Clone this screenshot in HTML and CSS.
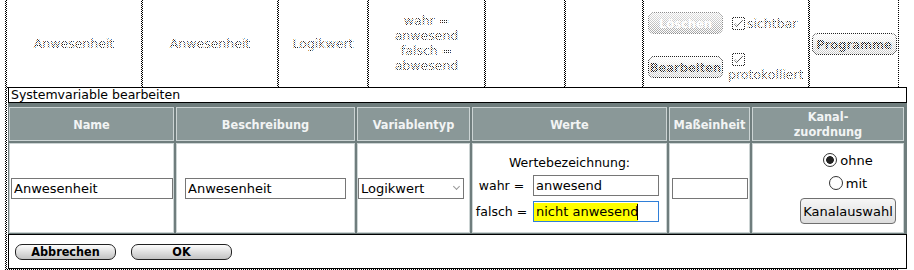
FILE: index.html
```html
<!DOCTYPE html>
<html lang="de">
<head>
  <meta charset="UTF-8">
  <title>Systemvariable bearbeiten</title>
<link rel="stylesheet" href="styles.css">
</head>
<body>

<div class="page">
  <div class="var_list">
    <div class="cell">Anwesenheit</div>
    <div class="cell">Anwesenheit</div>
    <div class="cell">Logikwert</div>
    <div class="cell values">wahr =<br>anwesend<br>falsch =<br>abwesend</div>
    <div class="cell"></div>
    <div class="cell"></div>
    <div class="cell actions">
      <div class="action_row">
        <button class="bg_btn" disabled>Löschen</button>
        <span class="check_label"><svg class="check" width="13" height="13" viewBox="0 0 13 13"><rect x="0.5" y="0.5" width="12" height="12" fill="#fff" stroke="#222"/><polyline points="2.5,6.5 5,9.5 10.5,3" fill="none" stroke="#555" stroke-width="1.3"/></svg>sichtbar</span>
      </div>
      <div class="action_row">
        <button class="bg_btn">Bearbeiten</button>
        <span class="check_label"><svg class="check" width="13" height="13" viewBox="0 0 13 13"><rect x="0.5" y="0.5" width="12" height="12" fill="#fff" stroke="#222"/><polyline points="2.5,6.5 5,9.5 10.5,3" fill="none" stroke="#555" stroke-width="1.3"/></svg>protokolliert</span>
      </div>
    </div>
    <div class="cell"><button class="bg_btn prog_btn">Programme</button></div>

    <div class="cell tall"></div>
    <div class="cell tall"></div>
    <div class="cell tall"></div>
    <div class="cell tall"></div>
    <div class="cell tall"></div>
    <div class="cell tall"></div>
    <div class="cell tall"></div>
    <div class="cell tall"></div>
  </div>
</div>

<!-- grey out the page behind the dialog -->
<div class="shade"></div>

<div class="dialog">
  <div class="dialog_title">Systemvariable bearbeiten</div>

  <div class="edit_table">
    <div class="head">Name</div>
    <div class="head">Beschreibung</div>
    <div class="head">Variablentyp</div>
    <div class="head">Werte</div>
    <div class="head">Maßeinheit</div>
    <div class="head">Kanal-<br>zuordnung</div>

    <div class="data name_cell"><input type="text" class="in_name" value="Anwesenheit"></div>
    <div class="data desc_cell"><input type="text" class="in_desc" value="Anwesenheit"></div>
    <div class="data type_cell">
      <span class="select_wrap">
        <select class="in_type">
          <option>Logikwert</option>
          <option>Werteliste</option>
          <option>Zahl</option>
          <option>Zeichenkette</option>
        </select>
      </span>
    </div>
    <div class="data values_cell">
      <div class="values_box">
        <div class="values_title">Wertebezeichnung:</div>
        <div class="values_grid">
          <label for="in_true">wahr =</label>
          <input type="text" id="in_true" class="in_value" value="anwesend">
          <label for="in_false">falsch =</label>
          <input type="text" id="in_false" class="in_value in_focus" value="nicht anwesend">
        </div>
      </div>
    </div>
    <div class="data unit_cell"><input type="text" class="in_unit" value=""></div>
    <div class="data channel_cell">
      <div class="channel_box">
        <label class="radio_row"><input type="radio" name="channel" checked>ohne</label>
        <label class="radio_row"><input type="radio" name="channel">mit</label>
        <button class="channel_btn">Kanalauswahl</button>
      </div>
    </div>
  </div>

  <div class="dialog_footer">
    <button class="foot_btn">Abbrechen</button>
    <button class="foot_btn">OK</button>
  </div>
</div>

</body>
</html>
```

FILE: styles.css
```css
*{
    padding: 0;
    margin: 0;
    box-sizing: border-box;
    font-family: 'DejaVu Sans', Verdana, sans-serif;
}
body{
    background: #fff;
    overflow: hidden;
    font-size: 12.5px;
    color: #222;
}

/* list of variables behind the dialog */
.page{
    padding-left: 5px;
}
.var_list{
    display: grid;
    grid-template-columns: 136px 136px 90px 117px 80px 78px 166px 90px;
    grid-template-rows: 88px 182px;
    width: 894px;
    border-left: 1px solid #000;
}
.var_list .cell{
    border: 1px solid #000;
    border-top: none;
    display: flex;
    align-items: center;
    justify-content: center;
    text-align: center;
    line-height: 15px;
}
.var_list .values{
    padding-bottom: 2px;
}
.var_list .actions{
    flex-direction: column;
    align-items: flex-start;
    justify-content: flex-start;
    padding: 12px 0 0 4px;
    gap: 18px;
}
.action_row{
    display: flex;
    align-items: center;
}
.check_label{
    display: block;
    width: 78px;
    margin-left: 5px;
    text-align: left;
    line-height: 15px;
}
.check{
    vertical-align: -2px;
    margin: 0 2px 0 4px;
}

/* bold captions in the dialog and the list use the narrow cut */
.bg_btn, .head, .foot_btn{
    font-family: 'DejaVu Sans', sans-serif;
    font-stretch: condensed;
    font-weight: bold;
}

.bg_btn{
    width: 75px;
    height: 22px;
    border: 1px solid #222;
    border-radius: 6px;
    background: linear-gradient(#fafafa, #c6c6c6);
    font-size: 12.8px;
    color: #111;
    white-space: nowrap;
    overflow: visible;
}
.bg_btn:disabled{
    color: #fff;
    border-color: #8a8a8a;
    background: linear-gradient(#e2e2e2, #a8a8a8);
}
.prog_btn{
    width: 85px;
    margin-top: 1px;
}

.shade{
    position: fixed;
    top: 0;
    left: 0;
    right: 0;
    bottom: 0;
    background-image: repeating-conic-gradient(#fff 0 25%, transparent 0 50%);
    background-size: 2px 2px;
}

/* the edit dialog */
.dialog{
    position: absolute;
    left: 8px;
    top: 87px;
    width: 899px;
    font-size: 12.5px;
    color: #000;
}
.dialog_title{
    height: 16px;
    border: 1px solid #000;
    background: #fff;
    line-height: 14px;
    padding-left: 2px;
}

.edit_table{
    display: grid;
    grid-template-columns: 165px 179px 113px 195px 81px 152px;
    grid-template-rows: 34px 90px;
    gap: 2px;
    padding: 4px 3px 1px 1px;
    background: #6f7d7d;
}
.head{
    background: #8a9898;
    border: 1px solid #ccd4d4;
    color: #f2f4f4;
    font-size: 12.6px;
    line-height: 15px;
    display: flex;
    align-items: center;
    justify-content: center;
    text-align: center;
}
.data{
    background: #fff;
    border: 1px solid #ccd4d4;
    display: flex;
    align-items: center;
}

input[type=text], select{
    height: 21px;
    border: 1px solid #767676;
    background-color: #fff;
    font-size: 13px;
    color: #000;
    padding: 0 2px;
    outline: none;
}
.name_cell{ padding-left: 1px; }
.in_name{ width: 162px; }
.desc_cell{ padding-left: 8px; }
.in_desc{ width: 161px; }
.unit_cell{ padding-left: 2px; }
.in_unit{ width: 76px; }

.select_wrap{
    position: relative;
    display: inline-block;
}
.in_type{
    width: 106px;
    appearance: none;
    -webkit-appearance: none;
    border-radius: 0;
}
.select_wrap::after{
    content: "";
    position: absolute;
    right: 5px;
    top: 6px;
    width: 4px;
    height: 4px;
    border-right: 1px solid #999;
    border-bottom: 1px solid #999;
    transform: rotate(45deg);
}

.values_cell{
    justify-content: flex-start;
}
.values_box{
    width: 100%;
}
.values_title{
    text-align: center;
    line-height: 16px;
    margin-bottom: 4px;
}
.values_grid{
    display: grid;
    grid-template-columns: 55px 126px;
    column-gap: 4px;
    row-gap: 5px;
    align-items: center;
    padding-left: 1px;
}
.values_grid label{
    text-align: center;
    white-space: nowrap;
}
.in_value{
    width: 126px;
}
/* focused field with marked text and caret */
input.in_value.in_focus{
    border-color: #2f7fd8;
    background-image: linear-gradient(#000, #000), linear-gradient(#ffff00, #ffff00);
    background-size: 1px 16px, 104px 18px;
    background-position: 103px 2px, 0 1px;
    background-repeat: no-repeat;
}

.channel_cell{
    justify-content: flex-end;
    padding-right: 4px;
}
.channel_box{
    width: 102px;
    display: flex;
    flex-direction: column;
    align-items: center;
    gap: 7px;
}
.radio_row{
    display: flex;
    align-items: center;
    height: 16px;
    font-size: 13px;
}
.radio_row input{
    appearance: none;
    -webkit-appearance: none;
    width: 14px;
    height: 14px;
    border: 1px solid #333;
    border-radius: 50%;
    background: #fff;
    margin-right: 3px;
}
.radio_row input:checked{
    background: radial-gradient(circle, #222 0 3.5px, #fff 4.2px);
}
.channel_btn{
    height: 26px;
    padding: 0 2px;
    border: 1px solid #6f6f6f;
    border-radius: 4px;
    background: linear-gradient(#f6f6f6, #dddddd);
    font-size: 13px;
    color: #000;
}

.dialog_footer{
    height: 35px;
    border: 1px solid #000;
    background: #fff;
    display: flex;
    gap: 15px;
    padding: 9px 0 0 6px;
}
.foot_btn{
    width: 101px;
    height: 16px;
    border: 1px solid #222;
    border-radius: 7px;
    background: linear-gradient(#fdfdfd, #c2c2c2);
    font-size: 12.5px;
    color: #000;
    line-height: 14px;
}
```
